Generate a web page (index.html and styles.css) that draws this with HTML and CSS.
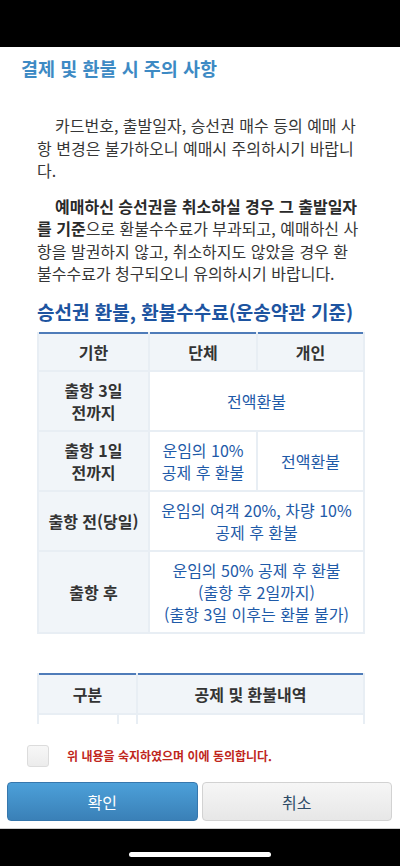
FILE: index.html
```html
<!DOCTYPE html>
<html lang="ko">
<head>
<meta charset="utf-8">
<meta name="viewport" content="width=device-width, initial-scale=1">
<title>결제 및 환불 시 주의 사항</title>
<link rel="stylesheet" href="styles.css">
</head>
<body>
<div class="screen">
  <div class="status"></div>
  <div class="main">
    <h1 class="title">결제 및 환불 시 주의 사항</h1>
    <div class="content">
      <p class="para">카드번호, 출발일자, 승선권 매수 등의 예매 사항 변경은 불가하오니 예매시 주의하시기 바랍니다.</p>
      <p class="para"><strong>예매하신 승선권을 취소하실 경우 그 출발일자를 기준</strong>으로 환불수수료가 부과되고, 예매하신 사항을 발권하지 않고, 취소하지도 않았을 경우 환불수수료가 청구되오니 유의하시기 바랍니다.</p>
      <h2 class="subtitle">승선권 환불, 환불수수료(운송약관 기준)</h2>
      <table class="fee">
        <colgroup><col class="c1"><col class="c2"><col class="c3"></colgroup>
        <thead>
          <tr><th>기한</th><th>단체</th><th>개인</th></tr>
        </thead>
        <tbody>
          <tr><th>출항 3일<br>전까지</th><td colspan="2">전액환불</td></tr>
          <tr><th>출항 1일<br>전까지</th><td>운임의 10%<br>공제 후 환불</td><td>전액환불</td></tr>
          <tr><th>출항 전(당일)</th><td colspan="2">운임의 여객 20%, 차량 10%<br>공제 후 환불</td></tr>
          <tr><th>출항 후</th><td colspan="2">운임의 50% 공제 후 환불<br>(출항 후 2일까지)<br>(출항 3일 이후는 환불 불가)</td></tr>
        </tbody>
      </table>
      <table class="fee second">
        <colgroup><col class="d1"><col class="d2"><col class="d3"></colgroup>
        <thead>
          <tr><th colspan="2">구분</th><th>공제 및 환불내역</th></tr>
        </thead>
        <tbody>
          <tr class="blank"><td></td><td></td><td></td></tr>
          <tr class="blank"><td></td><td></td><td></td></tr>
        </tbody>
      </table>
    </div>
  </div>
  <div class="footer">
    <div class="agree"><span class="check"></span><span class="agree-text">위 내용을 숙지하였으며 이에 동의합니다.</span></div>
    <div class="buttons">
      <button class="btn primary" type="button">확인</button>
      <button class="btn secondary" type="button">취소</button>
    </div>
  </div>
  <div class="home"><span class="indicator"></span></div>
</div>
</body>
</html>
```

FILE: styles.css
```css
* { box-sizing: border-box; }
html, body { margin: 0; padding: 0; }
body {
  font-family: "Noto Sans CJK KR", "Noto Sans", sans-serif;
  background: #000;
}
.screen {
  width: 400px;
  height: 866px;
  display: flex;
  flex-direction: column;
  background: #fff;
}
.status { height: 47px; background: #000; flex: none; }
.main {
  height: 677px;
  flex: none;
  overflow: hidden;
  background: #fff;
}
.title {
  margin: 9px 0 0 21px;
  font-size: 18.5px;
  line-height: 24px;
  font-weight: 700;
  color: #3d8ac4;
}
.content {
  padding: 34px 37px 0 37px;
}
.para {
  margin: 0 3px 13px 0;
  font-size: 16px;
  line-height: 22.5px;
  color: #363636;
  text-indent: 18px;
  word-break: break-all;
}
.para strong { color: #2a2a2a; font-weight: 700; }
.subtitle {
  margin: 15px 0 8px 0;
  font-size: 19px;
  line-height: 24px;
  font-weight: 700;
  color: #1d54a0;
}
.fee {
  width: 326px;
  border-collapse: collapse;
  table-layout: fixed;
  border-top: 2px solid #4f7cb9;
}
.fee .c1 { width: 111px; }
.fee .c2 { width: 108px; }
.fee .c3 { width: 107px; }
.fee th, .fee td {
  border: 2px solid #e8eef4;
  padding: 7px 2px;
  font-size: 16px;
  line-height: 22px;
  text-align: center;
  vertical-align: middle;
}
.fee th {
  background: #f1f5f9;
  color: #333;
  font-weight: 700;
}
.fee td {
  background: #fff;
  color: #1e5aa8;
  font-weight: 400;
}
.fee thead th { border-top: none; }
.second { margin-top: 39px; }
.second .d1 { width: 80px; }
.second .d2 { width: 19px; }
.second .d3 { width: 227px; }
.second thead th { padding: 8px 2px; }
.second .blank td { height: 60px; }
.footer {
  height: 105px;
  flex: none;
  padding: 21px 8px 7px 7px;
  background: #fff;
  border-bottom: 1px solid #cfcfcf;
  display: flex;
  flex-direction: column;
  gap: 15px;
}
.agree {
  display: flex;
  align-items: center;
  gap: 18px;
  padding-left: 20px;
  height: 22px;
}
.check {
  width: 22px;
  height: 22px;
  border: 1px solid #dcdcdc;
  border-radius: 3px;
  background: linear-gradient(#f7f7f7, #ececec);
  flex: none;
}
.agree-text {
  font-size: 12px;
  line-height: 16px;
  font-weight: 700;
  color: #c0261c;
}
.buttons {
  display: flex;
  gap: 4px;
  height: 39px;
}
.btn {
  flex: 1;
  height: 39px;
  border-radius: 4px;
  font-family: "Noto Sans CJK KR", "Noto Sans", sans-serif;
  font-size: 16px;
  line-height: 20px;
  padding: 0;
}
.primary {
  color: #fff;
  border: 1px solid #3677ad;
  background: linear-gradient(#4ca0d9, #3a80b7);
}
.secondary {
  color: #2d4a66;
  border: 1px solid #d2d2d2;
  background: linear-gradient(#f6f6f6, #e7e7e7);
}
.home {
  height: 37px;
  flex: none;
  background: #000;
  display: flex;
  justify-content: center;
  padding-top: 23px;
}
.indicator {
  width: 142px;
  height: 5px;
  border-radius: 3px;
  background: #fff;
}
```
